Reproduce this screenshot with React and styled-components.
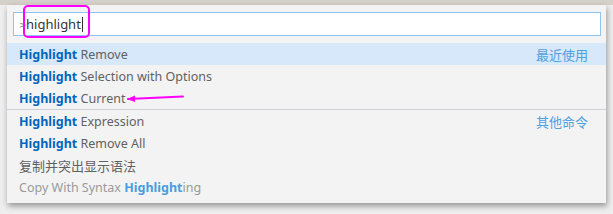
import React from "react";
import styled, { createGlobalStyle } from "styled-components";

const Global = createGlobalStyle`
  html, body { margin: 0; padding: 0; }
  body {
    background: #eeeeee;
    font-family: "Noto Sans", "Noto Sans CJK SC", sans-serif;
    width: 613px;
    height: 214px;
    overflow: hidden;
  }
`;

const Page = styled.div`
  position: relative;
  width: 613px;
  height: 214px;
  display: flex;
  flex-direction: column;
`;

const TopStrip = styled.div`
  height: 5px;
  background: #d5d0ca;
`;

const Palette = styled.div`
  margin-left: 7px;
  width: 599px;
  background: #f3f3f3;
  box-shadow: 1px 3px 6px rgba(0, 0, 0, 0.38);
  padding: 7px 0 5px;
  display: flex;
  flex-direction: column;
  gap: 7px;
`;

const InputBox = styled.div`
  margin: 0 5px 0 6px;
  height: 22px;
  border: 1px solid #8cc5ef;
  background: #ffffff;
  display: flex;
  align-items: center;
  padding-left: 5px;
`;

const Prompt = styled.span`
  width: 7px;
  font-size: 9px;
  color: #777;
  font-family: "DejaVu Sans", sans-serif;
  margin-top: 1px;
`;

const Query = styled.span`
  font-size: 13px;
  color: #333;
  font-family: "Noto Sans", sans-serif;
`;

const Caret = styled.span`
  width: 1px;
  height: 15px;
  background: #333;
  margin-left: 1px;
`;

const List = styled.div`
  display: flex;
  flex-direction: column;
`;

const Row = styled.div`
  height: 22px;
  display: flex;
  align-items: center;
  padding: 0 18px 0 12px;
  font-size: 12.5px;
  background: ${(p) => (p.$selected ? "#d6e8fa" : "transparent")};
  border-top: ${(p) => (p.$separator ? "1px solid #cfcfd6" : "none")};
  color: ${(p) => (p.$dim ? "#9a9a9a" : "#616161")};
  white-space: pre;
`;

const Label = styled.span`
  flex: 1;
`;

const Match = styled.b`
  font-weight: 700;
  color: ${(p) => (p.$dim ? "#4a9de0" : "#0066bf")};
`;

const CjkText = styled.span`
  font-family: "Noto Sans CJK SC", sans-serif;
  font-size: 13px;
`;

const Group = styled.span`
  color: #4f9fe0;
  font-size: 13px;
  font-family: "Noto Sans CJK SC", sans-serif;
`;

const MarkBox = styled.div`
  position: absolute;
  left: 23px;
  top: 5px;
  width: 63px;
  height: 29px;
  border: 2px solid #ff00ff;
  border-radius: 5px;
  pointer-events: none;
`;

const ArrowSvg = styled.svg`
  position: absolute;
  left: 125px;
  top: 92px;
  pointer-events: none;
`;

const items = [
  { m: "Highlight", rest: " Remove", group: "最近使用", selected: true },
  { m: "Highlight", rest: " Selection with Options" },
  { m: "Highlight", rest: " Current" },
  { m: "Highlight", rest: " Expression", group: "其他命令", separator: true },
  { m: "Highlight", rest: " Remove All" },
  { plain: "复制并突出显示语法" },
  { pre: "Copy With Syntax ", m: "Highlight", rest: "ing", dim: true },
];

export default function App() {
  return (
    <>
      <Global />
      <Page>
        <TopStrip />
        <Palette>
          <InputBox>
            <Prompt>&gt;</Prompt>
            <Query>highlight</Query>
            <Caret />
          </InputBox>
          <List>
            {items.map((it, i) => (
              <Row key={i} $selected={it.selected} $separator={it.separator} $dim={it.dim}>
                <Label>
                  {it.plain ? (
                    <CjkText>{it.plain}</CjkText>
                  ) : (
                    <>
                      {it.pre}
                      <Match $dim={it.dim}>{it.m}</Match>
                      {it.rest}
                    </>
                  )}
                </Label>
                {it.group && <Group>{it.group}</Group>}
              </Row>
            ))}
          </List>
        </Palette>
        <MarkBox />
        <ArrowSvg width="64" height="12" viewBox="0 0 64 12">
          <path d="M3 7 L58 4.5" stroke="#ff00ff" strokeWidth="2" strokeLinecap="round" fill="none" />
          <path d="M2 7 L10 3.5 L10 10 Z" fill="#ff00ff" />
        </ArrowSvg>
      </Page>
    </>
  );
}
